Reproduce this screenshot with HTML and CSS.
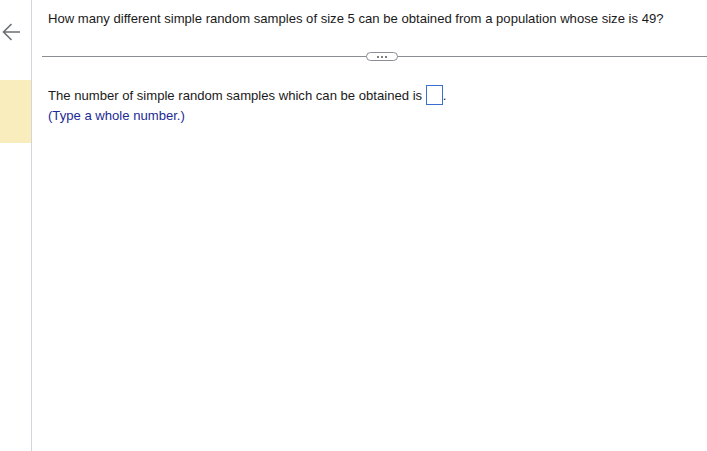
FILE: index.html
```html
<!DOCTYPE html>
<html>
<head>
<meta charset="utf-8">
<link rel="stylesheet" href="styles.css">
</head>
<body>
<div class="page">
  <aside class="side">
    <div class="back">
      <svg width="20" height="20" viewBox="0 0 20 20"><path d="M19 10H2.5M10.5 2L2.5 10l8 8" fill="none" stroke="#6b6f73" stroke-width="1.6"/></svg>
    </div>
    <div class="marker"></div>
  </aside>
  <main class="main">
    <p class="question">How many different simple random samples of size 5 can be obtained from a population whose size is 49?</p>
    <div class="divider">
      <span class="pill"><i></i><i></i><i></i></span>
    </div>
    <div class="answer">
      <p class="line">The number of simple random samples which can be obtained is <span class="box"></span>.</p>
      <p class="hint">(Type a whole number.)</p>
    </div>
  </main>
</div>
</body>
</html>
```
FILE: styles.css
```css
html, body {
  margin: 0;
  padding: 0;
  background: #fff;
}
body {
  font-family: "Liberation Sans", Arial, sans-serif;
  font-size: 13.1px;
  color: #1a1a1a;
}
.page {
  display: flex;
  height: 451px;
}
.side {
  width: 31px;
  border-right: 1px solid #d3d5da;
  display: flex;
  flex-direction: column;
}
.back {
  height: 22px;
  padding: 22px 0 0 1px;
  display: flex;
}
.marker {
  margin-top: 36px;
  height: 63px;
  background: #f9edbe;
}
.main {
  flex: 1;
  display: flex;
  flex-direction: column;
}
.question {
  margin: 11px 0 0 16px;
  line-height: 16px;
}
.divider {
  margin: 29px 0 0 10px;
  border-top: 1px solid #8a8d91;
  height: 0;
  display: flex;
  justify-content: center;
  padding-left: 14px;
}
.pill {
  margin-top: -5px;
  width: 30px;
  height: 7px;
  border: 1px solid #8a8d91;
  border-radius: 5px;
  background: #fff;
  display: flex;
  align-items: center;
  justify-content: center;
  gap: 2px;
}
.pill i {
  width: 2px;
  height: 2px;
  background: #555;
  border-radius: 1px;
}
.answer {
  margin: 28px 0 0 16px;
}
.line {
  margin: 0;
  line-height: 20px;
}
.box {
  display: inline-block;
  width: 15px;
  height: 18px;
  border: 1px solid #3a6fd0;
  vertical-align: -5px;
  margin-left: 0;
}
.hint {
  margin: 0;
  line-height: 20px;
  color: #1b2a96;
}
```
